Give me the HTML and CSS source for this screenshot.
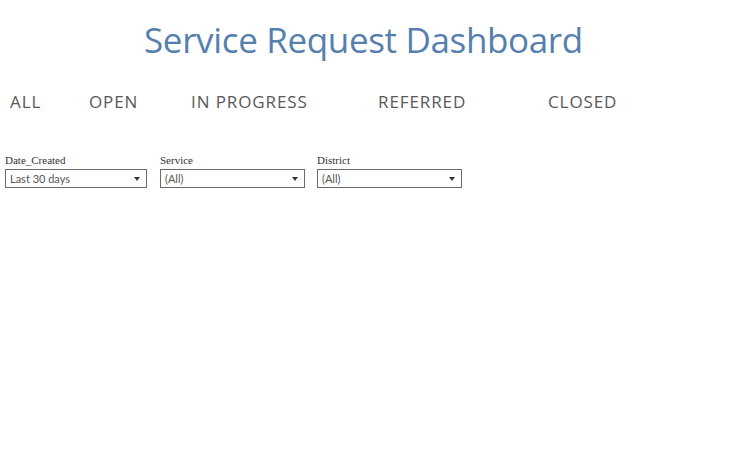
FILE: index.html
```html
<!DOCTYPE html>
<html>
<head>
<meta charset="utf-8">
<link rel="stylesheet" href="styles.css">
</head>
<body>
<div class="dash">
  <h1 class="title">Service Request Dashboard</h1>
  <nav class="tabs">
    <span class="tab tab-all">ALL</span>
    <span class="tab tab-open">OPEN</span>
    <span class="tab tab-prog">IN PROGRESS</span>
    <span class="tab tab-ref">REFERRED</span>
    <span class="tab tab-closed">CLOSED</span>
  </nav>
  <div class="filters">
    <div class="filter f-date">
      <div class="flabel">Date_Created</div>
      <div class="fbox"><span class="fval">Last 30 days</span><span class="caret"></span></div>
    </div>
    <div class="filter f-service">
      <div class="flabel">Service</div>
      <div class="fbox"><span class="fval">(All)</span><span class="caret"></span></div>
    </div>
    <div class="filter f-district">
      <div class="flabel">District</div>
      <div class="fbox"><span class="fval">(All)</span><span class="caret"></span></div>
    </div>
  </div>
</div>
</body>
</html>
```
FILE: styles.css
```css
html, body {
  margin: 0;
  padding: 0;
  background: #ffffff;
}
.dash {
  width: 736px;
  height: 454px;
}
.title {
  margin: 0;
  padding: 17px 0 0 144px;
  font-family: "Open Sans", sans-serif;
  font-weight: 400;
  font-size: 35px;
  line-height: 46px;
  letter-spacing: -0.35px;
  color: #5580ae;
  white-space: nowrap;
}
.tabs {
  display: flex;
  margin-top: 27px;
  padding-left: 10px;
  font-family: "Open Sans", sans-serif;
  font-size: 17px;
  line-height: 24px;
  letter-spacing: 0.9px;
  color: #595959;
}
.tab {
  display: block;
  white-space: nowrap;
}
.tab-all { width: 79px; }
.tab-open { width: 102px; }
.tab-prog { width: 187px; }
.tab-ref { width: 170px; }
.filters {
  display: flex;
  margin-top: 39px;
  padding-left: 5px;
}
.filter {
  display: flex;
  flex-direction: column;
}
.f-date { width: 155px; }
.f-service { width: 157px; }
.flabel {
  font-family: "Liberation Serif", serif;
  font-size: 11px;
  line-height: 14px;
  color: #333333;
  margin-bottom: 2px;
}
.fbox {
  box-sizing: border-box;
  height: 19px;
  border: 1px solid #6b6b6b;
  display: flex;
  align-items: center;
  justify-content: space-between;
  padding: 0 6px 0 4px;
  background: #fff;
}
.f-date .fbox { width: 142px; }
.f-service .fbox { width: 145px; }
.f-district .fbox { width: 145px; }
.fval {
  font-family: "Lato", sans-serif;
  font-size: 11px;
  color: #555555;
}
.caret {
  width: 0;
  height: 0;
  border-left: 3px solid transparent;
  border-right: 3px solid transparent;
  border-top: 4px solid #333;
}
```
